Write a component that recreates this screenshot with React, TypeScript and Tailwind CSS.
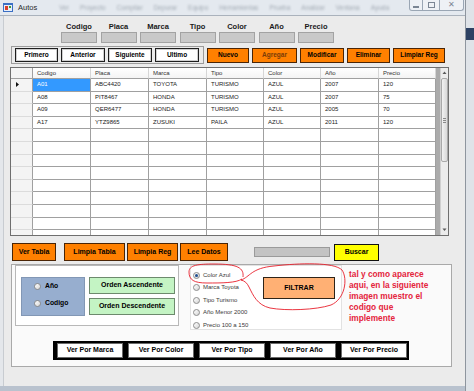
import React from 'react';

const fieldLabels = ['Codigo', 'Placa', 'Marca', 'Tipo', 'Color', 'Año', 'Precio'];

const navButtons = [
  { label: 'Primero', w: 'w-[43px]' },
  { label: 'Anterior', w: 'w-[44px]' },
  { label: 'Siguiente', w: 'w-[44px]' },
  { label: 'Ultimo', w: 'w-[44px]' },
];

const actionButtons = [
  { label: 'Nuevo', w: 'w-[42px]', text: 'text-black' },
  { label: 'Agregar', w: 'w-[45px]', text: 'text-[#7a3c08]' },
  { label: 'Modificar', w: 'w-[44px]', text: 'text-black' },
  { label: 'Eliminar', w: 'w-[43px]', text: 'text-black' },
  { label: 'Limpiar Reg', w: 'w-[52px]', text: 'text-black' },
];

const columns = ['Codigo', 'Placa', 'Marca', 'Tipo', 'Color', 'Año', 'Precio'];

const rows: string[][] = [
  ['A01', 'ABC4420', 'TOYOTA', 'TURISMO', 'AZUL', '2007', '120'],
  ['A08', 'PIT8467', 'HONDA', 'TURISMO', 'AZUL', '2007', '75'],
  ['A09', 'QER6477', 'HONDA', 'TURISMO', 'AZUL', '2005', '70'],
  ['A17', 'YTZ9865', 'ZUSUKI', 'PAILA', 'AZUL', '2011', '120'],
];

const emptyRows = Array.from({ length: 9 }, () => ['', '', '', '', '', '', '']);

const filters = ['Color Azul', 'Marca Toyota', 'Tipo Turismo', 'Año Menor 2000', 'Precio 100 a 150'];

const viewButtons = ['Ver Por Marca', 'Ver Por Color', 'Ver Por Tipo', 'Ver Por Año', 'Ver Por Precio'];

const menuWords = ['Ver', 'Proyecto', 'Compilar', 'Depurar', 'Equipo', 'Herramientas', 'Prueba', 'Analizar', 'Ventana', 'Ayuda'];

const gridCols = 'grid grid-cols-[22px_58px_58px_58px_57px_57px_58px_57px]';

const Radio: React.FC<{ checked?: boolean }> = ({ checked }) => (
  <span className="w-[7px] h-[7px] rounded-full border border-[#8c8c8c] bg-gradient-to-br from-white to-[#d6d6d6] flex items-center justify-center shrink-0">
    {checked && <span className="w-[3px] h-[3px] rounded-full bg-[#1f4f8f]" />}
  </span>
);

const TitleBar: React.FC = () => (
  <div className="h-[15px] flex items-center bg-[#e4e9ef] shrink-0">
    <svg width="10" height="9" viewBox="0 0 10 9" className="ml-[3px] shrink-0">
      <rect x="0" y="0" width="10" height="9" fill="#3a6fc4" />
      <rect x="1" y="2" width="8" height="6" fill="#e8eef8" />
      <rect x="2" y="3" width="3" height="4" fill="#d8402a" />
      <rect x="6" y="3" width="2" height="2" fill="#3a9a3a" />
    </svg>
    <span className="ml-[5px] text-[7.5px] text-[#2a2a2a] shrink-0">Autos</span>
    <div className="ml-[22px] flex-1 min-w-0 overflow-hidden flex gap-[11px] text-[6.5px] text-[#a3abb4] blur-[0.8px] whitespace-nowrap">
      {menuWords.map(w => (
        <span key={w}>{w}</span>
      ))}
    </div>
    <div className="ml-[6px] mr-[1px] flex self-start shrink-0">
      <div className="w-[14px] h-[11px] border border-t-0 border-[#9aa6b4] rounded-bl-[3px] bg-[#eef1f5] flex items-center justify-center">
        <span className="w-[6px] h-[2px] border border-[#7b8694] mt-[3px]" />
      </div>
      <div className="w-[17px] h-[11px] border border-t-0 border-l-0 border-[#9aa6b4] bg-[#eef1f5] flex items-center justify-center">
        <span className="w-[7px] h-[6px] border border-[#7b8694]" />
      </div>
      <div className="w-[24px] h-[11px] border border-t-0 border-l-0 border-[#9aa6b4] rounded-br-[3px] bg-[#eef1f5] flex items-center justify-center text-[8px] leading-none text-[#7b8694]">
        ✕
      </div>
    </div>
  </div>
);

const DataGrid: React.FC = () => (
  <div className="ml-[10px] mt-[3px] w-[439px] h-[169px] border border-[#6f6f6f] flex bg-[#ababab] overflow-hidden">
    <div className="w-[425px] flex flex-col bg-white overflow-hidden">
      <div className={`${gridCols} h-[11px] shrink-0`}>
        <div className="bg-[#f4f4f4] border-r border-b border-[#a0a0a0]" />
        {columns.map(c => (
          <div key={c} className="border-r border-b border-r-[#d6d6d6] border-b-[#a0a0a0] bg-gradient-to-b from-white to-[#f4f4f4] pl-[4px] text-[6px] leading-[10px] text-[#333]">
            {c}
          </div>
        ))}
      </div>
      {[...rows, ...emptyRows].map((r, i) => (
        <div key={i} className={`${gridCols} h-[12.6px] shrink-0`}>
          <div className="bg-[#f4f4f4] border-r border-b border-r-[#a0a0a0] border-b-[#dcdcdc] flex items-center pl-[5px]">
            {i === 0 && (
              <svg width="3" height="5" viewBox="0 0 3 5">
                <path d="M0 0 L3 2.5 L0 5 Z" fill="#111" />
              </svg>
            )}
          </div>
          {r.map((v, j) => (
            <div
              key={j}
              className={`border-r border-b border-[#a0a0a0] pl-[4px] text-[6px] leading-[11.6px] ${
                i === 0 && j === 0 ? 'bg-[#3399ff] text-white' : 'text-[#222]'
              }`}
            >
              {v}
            </div>
          ))}
        </div>
      ))}
    </div>
    <div className="ml-[4px] w-[8px] bg-[#ececec] border-l border-[#d0d0d0] flex flex-col items-center">
      <svg width="5" height="9" viewBox="0 0 5 9" className="shrink-0">
        <path d="M0.5 6 L2.5 3.5 L4.5 6 Z" fill="#5a5a5a" />
      </svg>
      <div className="w-[7px] h-[84px] mt-[1px] rounded-[2px] border border-[#a9a9a9] bg-gradient-to-r from-[#f2f2f2] to-[#d9d9d9] flex flex-col items-center justify-center gap-[1px]">
        <span className="w-[3px] h-px bg-[#8a8a8a]" />
        <span className="w-[3px] h-px bg-[#8a8a8a]" />
        <span className="w-[3px] h-px bg-[#8a8a8a]" />
      </div>
      <svg width="5" height="9" viewBox="0 0 5 9" className="mt-auto mb-[1px] shrink-0">
        <path d="M0.5 3.5 L2.5 6 L4.5 3.5 Z" fill="#5a5a5a" />
      </svg>
    </div>
  </div>
);

export default function App() {
  return (
    <div className="relative w-[474px] h-[391px] overflow-hidden flex bg-[#dfe3e8] font-['Liberation_Sans',Arial,sans-serif] text-black">
      <div className="w-[466px] h-[391px] flex flex-col border-r border-[#8e959e] shrink-0">
        <TitleBar />

        <div className="flex-1 flex flex-col bg-[#ebebeb] border-t border-[#aab2bc] shadow-[inset_3px_0_0_#e4e7eb,inset_4px_0_0_#c8ccd1]">
          {/* field labels */}
          <div className="ml-[61px] mt-[5px] grid grid-cols-[repeat(7,39.5px)] h-[11px]">
            {fieldLabels.map(l => (
              <div key={l} className="w-[36px] text-center text-[7.5px] font-bold leading-[11px] text-[#1a1a1a]">
                {l}
              </div>
            ))}
          </div>
          <div className="ml-[61px] grid grid-cols-[repeat(7,39.5px)] h-[11px]">
            {fieldLabels.map(l => (
              <div key={l} className="w-[36px] h-[11px] bg-[#c9c9c9] border border-[#a3a3a3]" />
            ))}
          </div>

          {/* navigation + actions */}
          <div className="mt-[3px] flex items-center h-[18px]">
            <div className="ml-[11px] w-[193px] h-[18px] border border-[#9c9c9c] flex items-center pl-[3px] gap-[3px]">
              {navButtons.map(b => (
                <div
                  key={b.label}
                  className={`${b.w} h-[14px] bg-white border border-[#1e1e1e] shadow-[inset_0_0_0_1px_#d0d0d0] flex items-center justify-center text-[6.5px] font-bold text-black`}
                >
                  {b.label}
                </div>
              ))}
            </div>
            <div className="ml-[3px] flex gap-[3px]">
              {actionButtons.map(b => (
                <div
                  key={b.label}
                  className={`${b.w} h-[15px] bg-[#ff8000] border border-[#4a2506] flex items-center justify-center text-[6.5px] font-bold ${b.text}`}
                >
                  {b.label}
                </div>
              ))}
            </div>
          </div>

          <DataGrid />

          {/* lower action row */}
          <div className="mt-[7px] h-[18px] flex items-center">
            <div className="ml-[12px] w-[44px] h-[18px] bg-[#ff8000] border border-[#4a2506] flex items-center justify-center text-[7px] font-bold">Ver Tabla</div>
            <div className="ml-[8px] w-[61px] h-[18px] bg-[#ff8000] border border-[#4a2506] flex items-center justify-center text-[7px] font-bold">Limpia Tabla</div>
            <div className="ml-[2px] w-[51px] h-[18px] bg-[#ff8000] border border-[#4a2506] flex items-center justify-center text-[7px] font-bold">Limpia Reg</div>
            <div className="ml-[2px] w-[48px] h-[18px] bg-[#ff8000] border border-[#4a2506] flex items-center justify-center text-[7px] font-bold">Lee Datos</div>
            <div className="ml-[26px] w-[76px] h-[10px] bg-[#c3c3c3] border border-[#9a9a9a]" />
            <div className="ml-[4px] w-[45px] h-[17px] bg-[#ffff00] border border-[#111] flex items-center justify-center text-[7px] font-bold">Buscar</div>
          </div>

          {/* filter panel */}
          <div className="ml-[11px] mt-[3px] w-[441px] h-[103px] border border-[#a9a9a9] bg-[#fafafa] flex flex-col">
            <div className="h-[65px] flex items-start">
              <div className="ml-[3px] w-[164px] h-[61px] border border-[#b8b8b8] bg-white flex items-start pl-[5px] pt-[11px] gap-[4px]">
                <div className="w-[64px] h-[39px] bg-[#97aecf] border border-[#8297b5] flex flex-col pt-[3px] gap-[7px]">
                  {['Año', 'Codigo'].map(r => (
                    <div key={r} className="h-[10px] flex items-center pl-[12px] gap-[4px] text-[6.8px] font-bold">
                      <Radio />
                      <span>{r}</span>
                    </div>
                  ))}
                </div>
                <div className="flex flex-col gap-[4px]">
                  {['Orden Ascendente', 'Orden Descendente'].map(b => (
                    <div key={b} className="w-[86px] h-[17px] bg-[#c4f4c4] border border-[#6d8a6d] flex items-center justify-center text-[7px] font-bold">
                      {b}
                    </div>
                  ))}
                </div>
              </div>

              <div className="ml-[11px] w-[152px] h-[65px] border border-[#e2e2e2] bg-white flex items-start overflow-hidden">
                <div className="w-[72px] pl-[2px] pt-[3px] flex flex-col">
                  {filters.map((f, i) => (
                    <div key={f} className="h-[12.5px] flex items-center gap-[3px] text-[6px] text-[#3a3a3a] whitespace-nowrap">
                      <Radio checked={i === 0} />
                      <span>{f}</span>
                    </div>
                  ))}
                </div>
                <div className="mt-[11px] w-[72px] h-[22px] bg-[#ffb074] border border-[#2e2418] flex items-center justify-center text-[7px] font-bold">
                  FILTRAR
                </div>
              </div>

              <div className="ml-[7px] pt-[4px] text-[8.3px] font-bold leading-[11px] text-[#e4243c]">
                <div>tal y como aparece</div>
                <div>aqui, en la siguiente</div>
                <div>imagen muestro el</div>
                <div>codigo que</div>
                <div>implemente</div>
              </div>
            </div>

            <div className="ml-[41px] mt-[11px] h-[19px] w-[356px] bg-black flex items-center pl-[4px] pr-[2px] gap-[5px]">
              {viewButtons.map(v => (
                <div key={v} className="w-[66px] h-[15px] bg-white border border-[#6a6a6a] flex items-center justify-center text-[7px] font-bold">
                  {v}
                </div>
              ))}
            </div>
          </div>
        </div>

        <div className="h-[5px] bg-[#b9c2ce] shrink-0" />
      </div>

      <div className="flex-1 flex flex-col">
        <div className="h-[28px]" />
        <div className="h-[12px] bg-[#2e4264]" />
      </div>

      <svg className="absolute left-0 top-0 pointer-events-none" width="474" height="391" viewBox="0 0 474 391">
        <path
          d="M243 277 C244 268 238 264 214 264 C198 264 189 265 189 272 C189 280 194 283 207 283 C222 283 236 283 242 279"
          fill="none"
          stroke="#e8202c"
          strokeWidth="0.9"
        />
        <path
          d="M241 280 C250 277 251 268 274 266 C300 263 334 262 342 270 C348 279 345 299 331 305 C316 310 286 311 270 308 C257 305 253 295 249 287 C247 283 245 281 241 280"
          fill="none"
          stroke="#e8202c"
          strokeWidth="0.9"
        />
      </svg>
    </div>
  );
}
